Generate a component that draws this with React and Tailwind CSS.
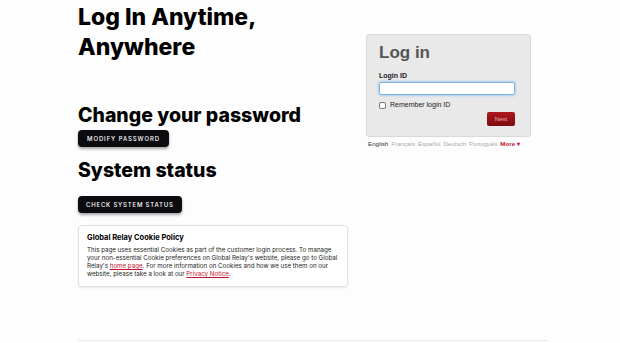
import React from 'react';

const head = { fontFamily: 'Inter, "Open Sans", sans-serif' };
const arial = { fontFamily: '"Liberation Sans", Arial, sans-serif' };

export default function App() {
  return (
    <div className="w-[620px] h-[343px] overflow-hidden bg-[#fdfdfd] text-black relative">
      <div className="flex pl-[78px]">
        {/* Left column */}
        <div className="w-[270px] flex flex-col" style={head}>
          <h1 className="text-[23px] leading-[30px] font-extrabold mt-[2px]">
            Log In Anytime,<br />Anywhere
          </h1>

          <h2 className="mt-[40px] text-[19.5px] leading-[26px] font-extrabold">Change your password</h2>
          <button className="mt-[2px] self-start h-[17px] px-[9px] rounded-[4px] bg-[#0b0b10] text-white text-[6px] font-medium tracking-[0.9px] shadow-[0_2px_3px_rgba(0,0,0,0.35)]">
            MODIFY PASSWORD
          </button>

          <h2 className="mt-[10px] text-[19.5px] leading-[26px] font-extrabold">System status</h2>
          <button className="mt-[13px] self-start h-[17px] px-[8px] rounded-[4px] bg-[#0b0b10] text-white text-[6px] font-medium tracking-[0.8px] shadow-[0_2px_3px_rgba(0,0,0,0.35)]">
            CHECK SYSTEM STATUS
          </button>

          <div className="mt-[12px] border border-[#e2e2e2] rounded-[4px] bg-white shadow-[0_1px_2px_rgba(0,0,0,0.08)] px-[8px] pt-[7px] pb-[8px]">
            <div className="text-[7.5px] font-bold leading-[10px]">Global Relay Cookie Policy</div>
            <p className="mt-[3px] text-[6.2px] leading-[8px] text-[#222] whitespace-nowrap">
              This page uses essential Cookies as part of the customer login process. To manage<br />
              your non-essential Cookie preferences on Global Relay's website, please go to Global<br />
              Relay's <a className="text-[#c8102e] underline">home page</a>. For more information on Cookies and how we use them on our<br />
              website, please take a look at our <a className="text-[#c8102e] underline">Privacy Notice</a>.
            </p>
          </div>
        </div>

        {/* Right column */}
        <div className="ml-[18px] mt-[34px] w-[165px]" style={arial}>
          <div className="bg-[#e9e9e9] border border-[#d9d9d9] rounded-[3px] pl-[12px] pr-[15px] pt-[8px] pb-[10px]">
            <div className="text-[17px] font-bold text-[#555] leading-[20px]">Log in</div>
            <div className="mt-[9px] text-[7px] font-bold text-[#222] leading-[8px]">Login ID</div>
            <div className="mt-[2px] h-[13px] bg-white border border-[#7fb2e5] rounded-[2px] shadow-[0_0_3px_rgba(82,168,236,0.8)]" />
            <label className="mt-[6px] flex items-center gap-[4px] text-[7px] text-[#222] leading-[8px]">
              <span className="w-[7px] h-[7px] border border-[#777] bg-white rounded-[2px]" />
              Remember login ID
            </label>
            <div className="mt-[3px] flex justify-end">
              <button className="w-[28px] h-[14px] rounded-[2px] bg-gradient-to-b from-[#b0161e] to-[#7e0b10] text-[#e8b9bb] text-[6px]">
                Next
              </button>
            </div>
          </div>
          <div className="mt-[2px] pl-[2px] flex items-center gap-[3px] text-[6.2px] text-[#aaa]">
            <span className="text-[#333]">English</span>
            <span>Français</span>
            <span>Español</span>
            <span>Deutsch</span>
            <span>Português</span>
            <span className="text-[#c8102e] font-bold">More ▾</span>
          </div>
        </div>
      </div>

      <div className="absolute left-[78px] top-[340px] w-[470px] border-t border-[#e8e8e8]" />
    </div>
  );
}
